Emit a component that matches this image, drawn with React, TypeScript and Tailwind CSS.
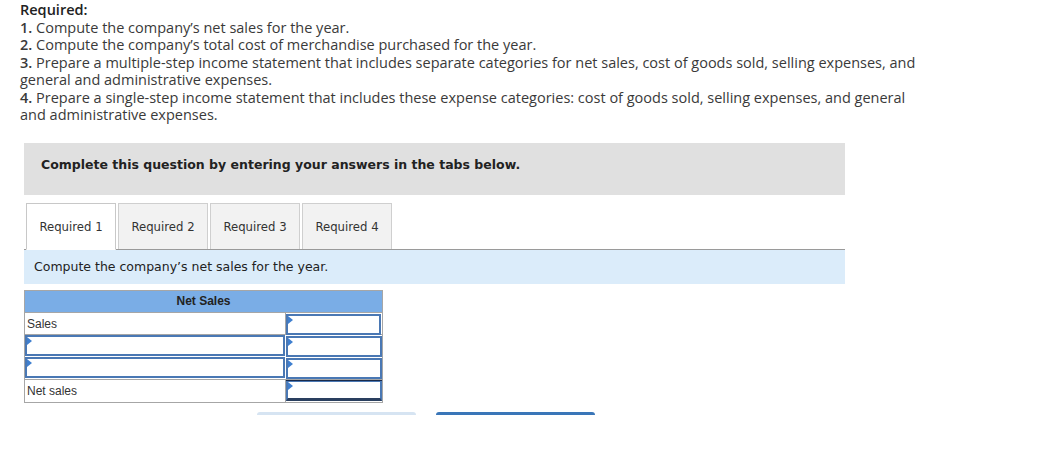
import React from "react";

function Flag() {
  return (
    <span className="absolute left-0 top-0 w-0 h-0 border-t-[4px] border-b-[4px] border-l-[5px] border-t-transparent border-b-transparent border-l-[#3f7fcf]" />
  );
}

function InputCell() {
  return (
    <div className="relative h-[21px] border-2 border-[#4a78b4] bg-white">
      <Flag />
    </div>
  );
}

export default function App() {
  const tabs = ["Required 1", "Required 2", "Required 3", "Required 4"];
  return (
    <div className="w-[1047px] h-[454px] bg-white overflow-hidden text-[#333]">
      <div className="pl-[20px] pt-[1px] w-[921px] text-[14.5px] leading-[17.5px] text-[#3a3a3a]" style={{ fontFamily: '"Open Sans", "Liberation Sans", sans-serif' }}>
        <div className="font-semibold text-[#222]">Required:</div>
        <div><span className="font-semibold">1.</span> Compute the company’s net sales for the year.</div>
        <div><span className="font-semibold">2.</span> Compute the company’s total cost of merchandise purchased for the year.</div>
        <div><span className="font-semibold">3.</span> Prepare a multiple-step income statement that includes separate categories for net sales, cost of goods sold, selling expenses, and general and administrative expenses.</div>
        <div><span className="font-semibold">4.</span> Prepare a single-step income statement that includes these expense categories: cost of goods sold, selling expenses, and general and administrative expenses.</div>
      </div>

      <div className="ml-[24px] mt-[19px] w-[821px]" style={{ fontFamily: '"DejaVu Sans", Verdana, sans-serif' }}>
        <div className="h-[52px] bg-[#e0e0e0] pt-[13px] pl-[17px] text-[12.5px] font-bold text-[#222]">
          Complete this question by entering your answers in the tabs below.
        </div>

        <div className="mt-[8px] flex items-end border-b border-[#9a9a9a] h-[47px]">
          {tabs.map((t, i) => (
            <div
              key={t}
              className={
                i === 0
                  ? "ml-[2px] w-[90px] h-[47px] -mb-px bg-white border border-[#c8c8c8] border-b-white flex items-center justify-center pt-[3px] text-[11.7px] text-[#333]"
                  : "ml-[2px] w-[90px] h-[46px] bg-[#f2f2f2] border border-[#cfcfcf] border-b-0 flex items-center justify-center pt-[3px] text-[11.7px] text-[#333]"
              }
            >
              {t}
            </div>
          ))}
        </div>

        <div className="h-[34px] bg-[#dbecfa] flex items-center pl-[10px] pt-px text-[12.5px] text-[#222]">
          Compute the company’s net sales for the year.
        </div>

        <div className="mt-[6px] w-[359px] border border-[#a6a6a6]" style={{ fontFamily: '"Liberation Sans", Arial, sans-serif' }}>
          <div className="h-[22px] bg-[#7aade6] border-b border-[#a6a6a6] flex items-center justify-center text-[12px] font-bold text-[#222]">
            Net Sales
          </div>
          <div className="flex h-[22px] border-b border-[#a6a6a6]">
            <div className="w-[261px] border-r border-[#a6a6a6] flex items-center pl-[2px] pt-[2px] text-[12px] text-[#333]">Sales</div>
            <div className="flex-1 p-px pl-0"><InputCell /></div>
          </div>
          <div className="flex h-[22px]">
            <div className="w-[261px] pr-px"><InputCell /></div>
            <div className="flex-1 pt-px"><InputCell /></div>
          </div>
          <div className="flex h-[22px]">
            <div className="w-[261px] pr-px"><InputCell /></div>
            <div className="flex-1 pt-px"><InputCell /></div>
          </div>
          <div className="flex h-[23px] border-t border-[#a6a6a6]">
            <div className="w-[261px] border-r border-[#a6a6a6] flex items-center pl-[2px] pt-[1px] text-[12px] text-[#333]">Net sales</div>
            <div className="flex-1 border-t border-[#1a2a4a]">
              <div className="relative h-[20px] border-2 border-t border-[#4a78b4] border-b-[3px] border-b-[#2a3f5f] bg-white"><Flag /></div>
            </div>
          </div>
        </div>
      </div>

      <div className="flex mt-[9px] ml-[257px] gap-[20px]">
        <div className="w-[159px] h-[3px] rounded-t-sm bg-[#d6e4f2]" />
        <div className="w-[159px] h-[3px] rounded-t-sm bg-[#3a76b8]" />
      </div>
    </div>
  );
}
